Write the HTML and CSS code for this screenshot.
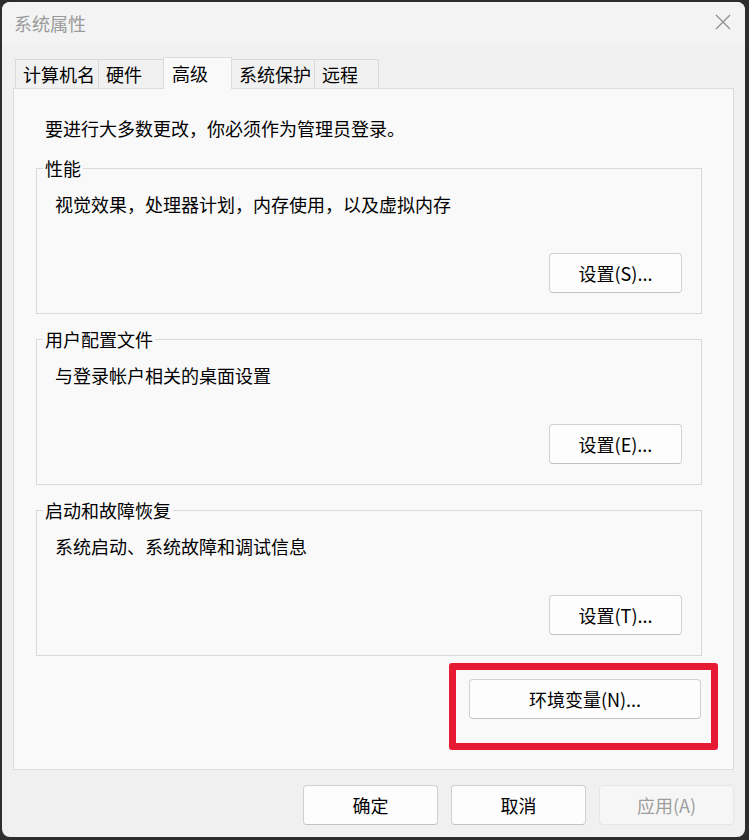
FILE: index.html
```html
<!DOCTYPE html>
<html lang="zh-CN">
<head>
<meta charset="utf-8">
<title>系统属性</title>
<link rel="stylesheet" href="styles.css">
</head>
<body>
<div class="window">
  <div class="titlebar">
    <span class="title">系统属性</span>
    <svg class="close" width="16" height="16" viewBox="0 0 16 16"><path d="M1 1 L15 15 M15 1 L1 15" stroke="#8c8c8c" stroke-width="1.2" fill="none"/></svg>
  </div>
  <div class="content">
    <div class="tabs">
      <div class="tab tab-wide">计算机名</div>
      <div class="tab tab-hw">硬件</div>
      <div class="tab selected">高级</div>
      <div class="tab tab-wide">系统保护</div>
      <div class="tab tab-narrow">远程</div>
    </div>
    <div class="panel">
      <p class="note">要进行大多数更改，你必须作为管理员登录。</p>
      <fieldset class="group">
        <legend>性能</legend>
        <p class="desc">视觉效果，处理器计划，内存使用，以及虚拟内存</p>
        <div class="group-actions"><button class="btn btn-set">设置(S)...</button></div>
      </fieldset>
      <fieldset class="group">
        <legend>用户配置文件</legend>
        <p class="desc">与登录帐户相关的桌面设置</p>
        <div class="group-actions"><button class="btn btn-set">设置(E)...</button></div>
      </fieldset>
      <fieldset class="group">
        <legend>启动和故障恢复</legend>
        <p class="desc">系统启动、系统故障和调试信息</p>
        <div class="group-actions"><button class="btn btn-set">设置(T)...</button></div>
      </fieldset>
      <div class="env-row">
        <div class="env-wrap">
          <button class="btn btn-env">环境变量(N)...</button>
          <div class="highlight"></div>
        </div>
      </div>
    </div>
    <div class="footer">
      <button class="btn btn-foot">确定</button>
      <button class="btn btn-foot">取消</button>
      <button class="btn btn-foot disabled">应用(A)</button>
    </div>
  </div>
</div>
</body>
</html>
```
FILE: styles.css
```css
* { box-sizing: border-box; }
html, body {
  margin: 0;
  padding: 0;
  background: #2d2d2d;
  width: 749px;
  height: 840px;
  overflow: hidden;
}
body {
  font-family: "Noto Sans CJK SC", "Noto Sans", sans-serif;
  font-size: 18px;
  color: #000;
}
.window {
  margin: 2px;
  width: 743px;
  height: 835px;
  background: #f0f0f0;
  border-radius: 8px;
  overflow: hidden;
  display: flex;
  flex-direction: column;
}
.titlebar {
  height: 42px;
  flex: none;
  background: #f3f3f3;
  display: flex;
  align-items: center;
  justify-content: space-between;
  padding: 0 14px 0 12px;
}
.title {
  color: #9a9a9a;
  font-size: 18px;
  line-height: 24px;
}
.close { display: block; margin-top: -2px; }
.content {
  flex: 1;
  display: flex;
  flex-direction: column;
  padding: 13px 11px 12px 11px;
}
.tabs {
  display: flex;
  align-items: flex-end;
  height: 31px;
  padding-left: 2px;
  flex: none;
}
.tab {
  flex: none;
  height: 29px;
  line-height: 28px;
  padding: 0 0 0 7px;
  border: 1px solid #d9d9d9;
  border-bottom: none;
  margin-right: -1px;
  background: #f0f0f0;
  white-space: nowrap;
}
.tab-wide { width: 84px; }
.tab-hw { width: 68px; }
.tab-narrow { width: 65px; }
.tab.selected {
  width: 69px;
  height: 32px;
  line-height: 30px;
  padding-left: 8px;
  margin: 0 -1px -1px -2px;
  background: #f9f9f9;
  border-color: #dcdcdc;
  position: relative;
  z-index: 1;
}
.panel {
  flex: 1;
  background: #f9f9f9;
  border: 1px solid #dcdcdc;
  padding: 27px 31px 0 22px;
  display: flex;
  flex-direction: column;
}
.note {
  margin: 0 0 16px 9px;
  line-height: 24px;
}
.group {
  margin: 0 0 13px 0;
  padding: 12px 19px 20px 18px;
  border: 1px solid #d9d9d9;
  min-width: 0;
}
.group legend {
  padding: 0 2px;
  margin-left: -12px;
  line-height: 24px;
}
.desc {
  margin: 0;
  line-height: 24px;
}
.group-actions {
  display: flex;
  justify-content: flex-end;
  margin-top: 37px;
}
.btn {
  font-family: inherit;
  font-size: 18px;
  color: #000;
  background: #fdfdfd;
  border: 1px solid #d0d0d0;
  border-bottom-color: #c2c2c2;
  border-radius: 4px;
  height: 40px;
  padding: 0;
  line-height: 24px;
}
.btn-set { width: 133px; }
.env-row {
  display: flex;
  justify-content: flex-end;
  margin-top: 10px;
  padding-right: 1px;
}
.env-wrap { position: relative; }
.btn-env { width: 232px; height: 40px; display: block; }
.highlight {
  position: absolute;
  left: -20px;
  top: -16px;
  right: -17px;
  bottom: -31px;
  border: 7px solid #e61b33;
  border-radius: 3px;
  pointer-events: none;
}
.footer {
  flex: none;
  display: flex;
  justify-content: flex-end;
  gap: 13px;
  padding-top: 15px;
}
.btn-foot { width: 135px; height: 40px; }
.btn.disabled {
  background: #f6f6f6;
  border-color: #e6e6e6;
  color: #9e9e9e;
}
```
